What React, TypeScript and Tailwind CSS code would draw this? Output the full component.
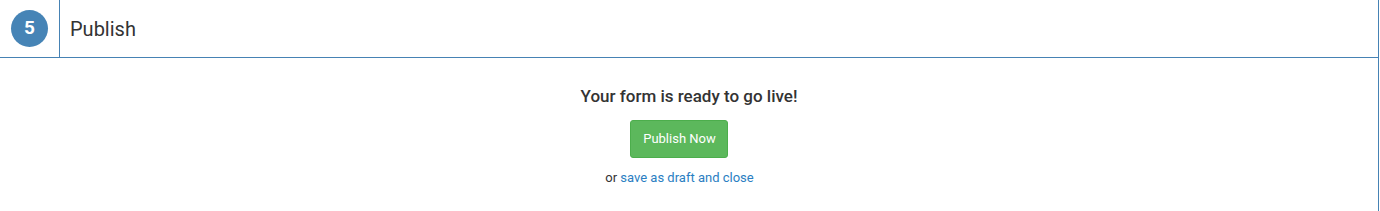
export default function App() {
  return (
    <div className="w-[1379px] h-[211px] bg-white border-r border-[#4682b4] font-['Roboto','Liberation_Sans',sans-serif]">
      <div className="flex h-[58px] border-b border-[#4682b4]">
        <div className="w-[60px] border-r border-[#4682b4] flex items-center justify-center">
          <div className="w-[37px] h-[37px] rounded-full bg-[#4684b6] text-white font-bold text-[19px] flex items-center justify-center">
            5
          </div>
        </div>
        <div className="flex items-center pl-[10px] text-[20px] text-[#333]">Publish</div>
      </div>
      <div className="flex flex-col items-center pt-[27px]">
        <h3 className="text-[17px] font-medium text-[#333] leading-[22px]">Your form is ready to go live!</h3>
        <div className="flex flex-col items-center pr-[19px]">
          <button className="mt-[13px] w-[98px] h-[38px] rounded-[3px] bg-[#5cb85c] border border-[#4cae4c] text-white text-[13px]">
            Publish Now
          </button>
          <p className="mt-[10px] text-[13px] text-[#333]">
            or <a className="text-[#2a7ec2]">save as draft and close</a>
          </p>
        </div>
      </div>
    </div>
  );
}
